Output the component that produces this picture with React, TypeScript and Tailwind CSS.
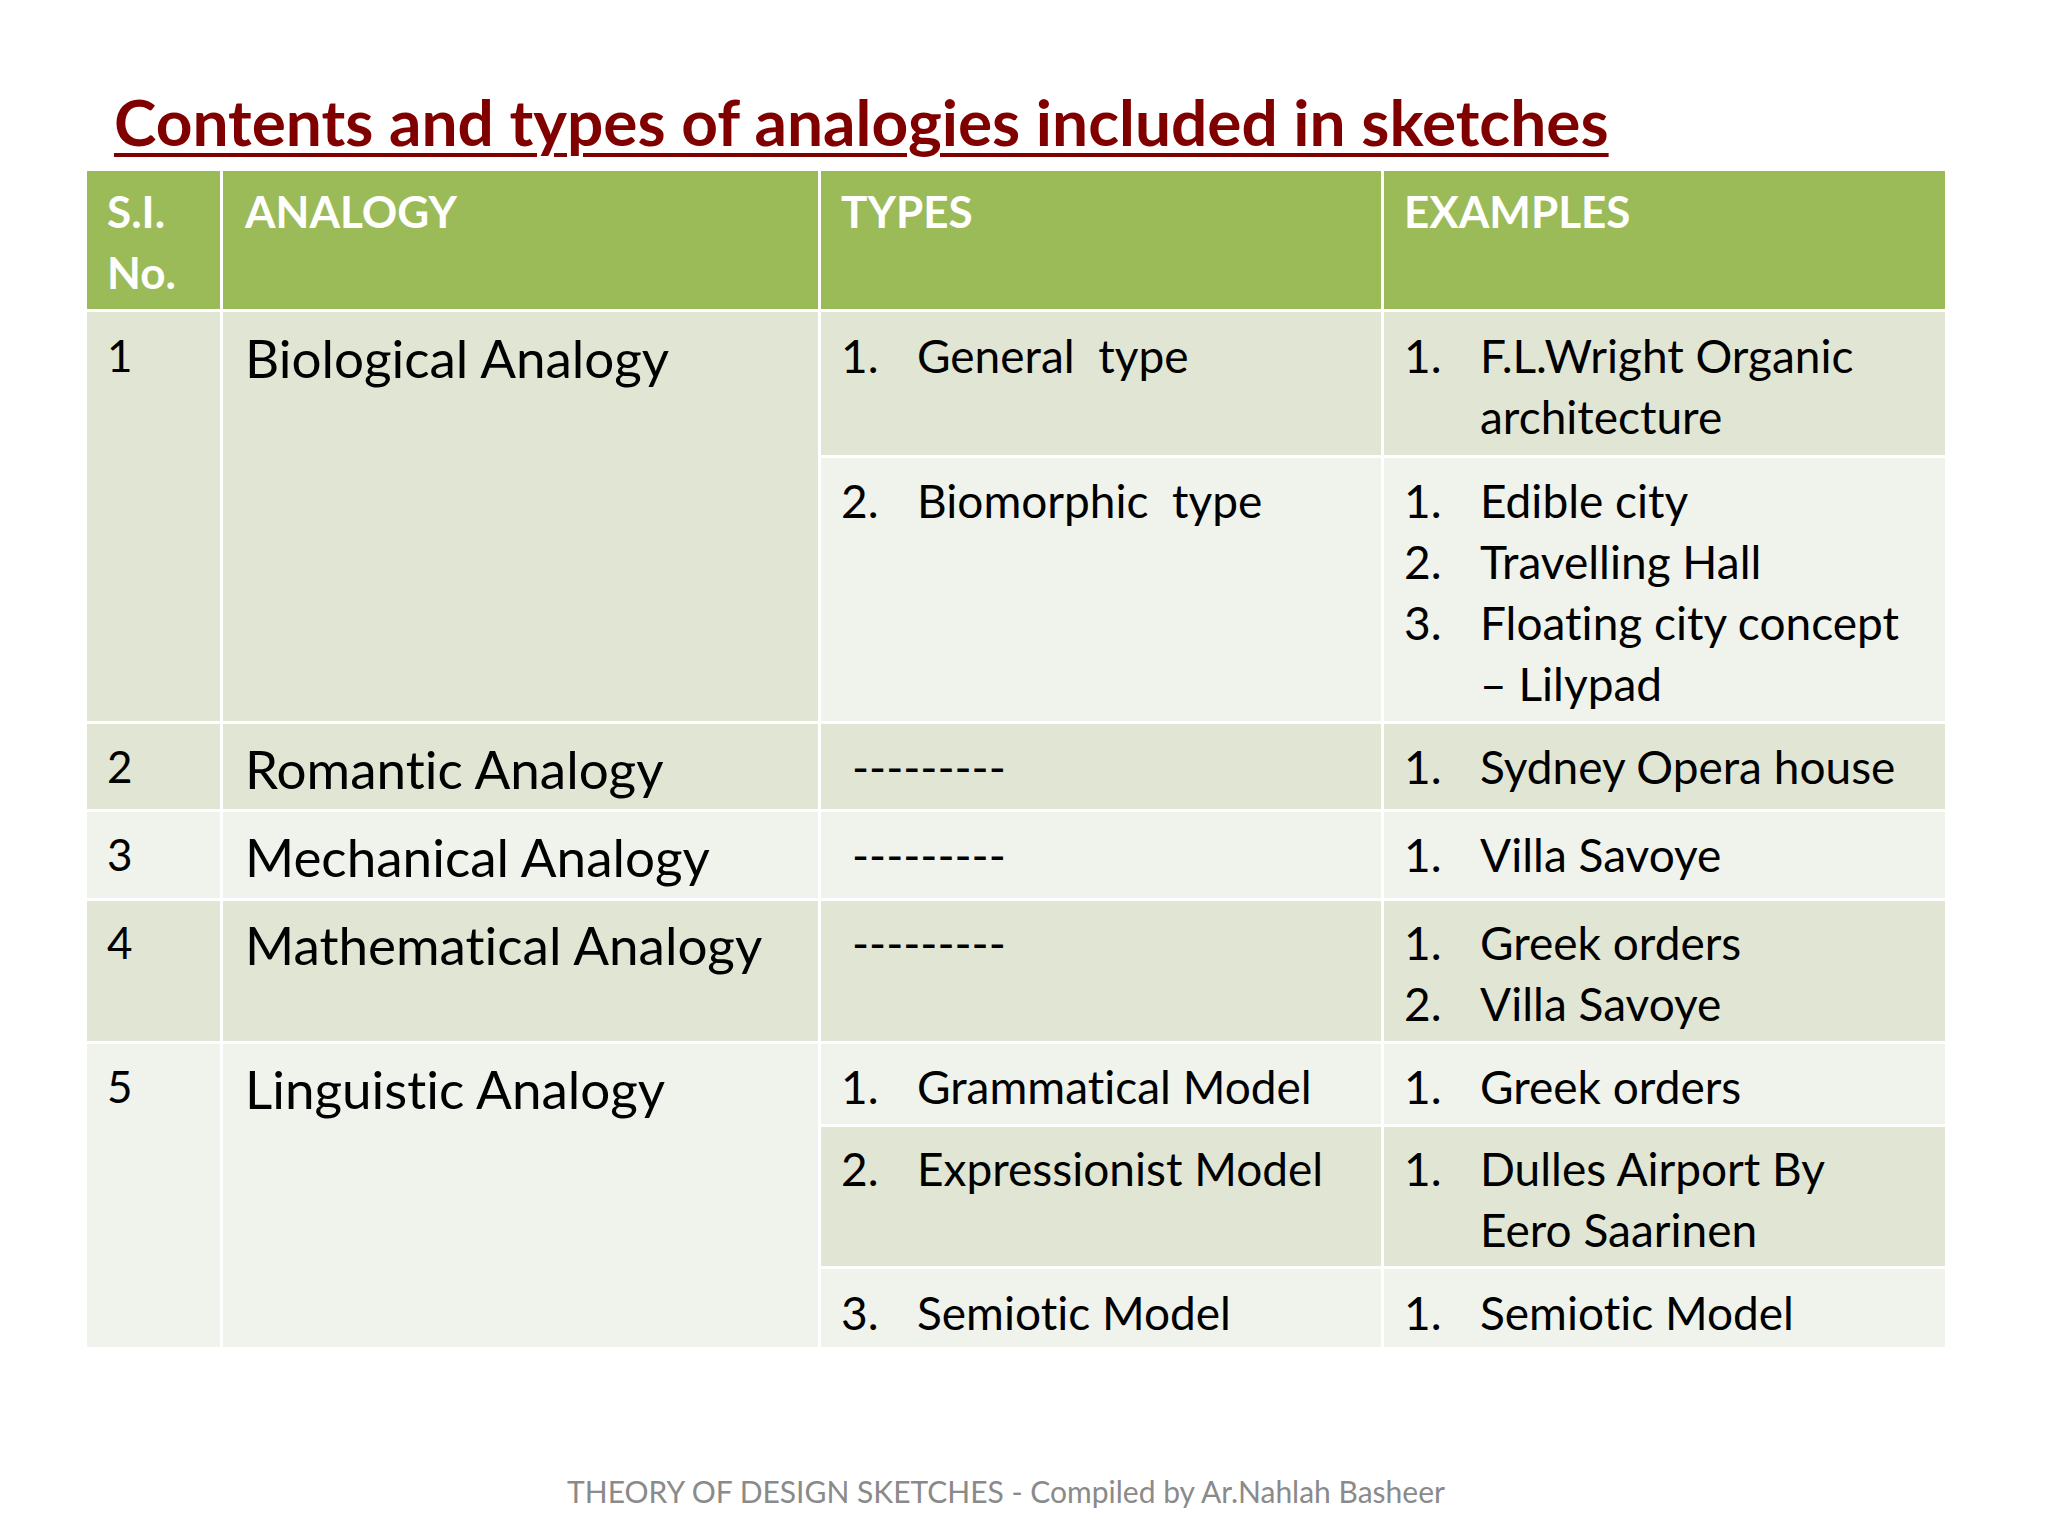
import React from "react";

const dark = "bg-[#e0e6d3]";
const light = "bg-[#eff3ec]";

function Num({ n, children }: { n: string; children: React.ReactNode }) {
  return (
    <div className="flex">
      <span className="w-[76px] shrink-0">{n}</span>
      <span>{children}</span>
    </div>
  );
}

export default function App() {
  const cell = "border-[3px] border-white align-top p-0";
  return (
    <div
      className="w-[2048px] h-[1536px] bg-white flex flex-col text-black [font-variant-ligatures:none]"
      style={{ fontFamily: "Lato, 'Open Sans', sans-serif" }}
    >
      <h1 className="ml-[114px] mt-[86px] text-[64px] leading-[72px] font-bold text-[#800000] underline decoration-[4px] underline-offset-[7px]">
        Contents and types of analogies included in sketches
      </h1>

      <table className="ml-[84px] mt-[10px] w-[1861px] table-fixed border-collapse text-[46px] leading-[61px]">
        <colgroup>
          <col className="w-[136px]" />
          <col className="w-[598px]" />
          <col className="w-[563px]" />
          <col className="w-[564px]" />
        </colgroup>
        <thead>
          <tr className="h-[141px] bg-[#9bbb59] text-white font-bold">
            <th className={`${cell} text-left pl-[20px] pt-[10px] text-[44px]`}>
              S.I.
              <br />
              No.
            </th>
            <th className={`${cell} text-left pl-[22px] pt-[10px] text-[44px]`}>ANALOGY</th>
            <th className={`${cell} text-left pl-[20px] pt-[10px] text-[44px]`}>TYPES</th>
            <th className={`${cell} text-left pl-[20px] pt-[10px] text-[44px]`}>EXAMPLES</th>
          </tr>
        </thead>
        <tbody>
          <tr className="h-[146px]">
            <td rowSpan={2} className={`${cell} ${dark} pl-[20px] pt-[13px] text-[44px]`}>1</td>
            <td rowSpan={2} className={`${cell} ${dark} pl-[22px] pt-[15px] text-[53px]`}>Biological Analogy</td>
            <td className={`${cell} ${dark} pl-[20px] pt-[13px]`}>
              <Num n="1.">General&nbsp; type</Num>
            </td>
            <td className={`${cell} ${dark} pl-[20px] pt-[13px]`}>
              <Num n="1.">F.L.Wright Organic architecture</Num>
            </td>
          </tr>
          <tr className="h-[266px]">
            <td className={`${cell} ${light} pl-[20px] pt-[12px]`}>
              <Num n="2.">Biomorphic&nbsp; type</Num>
            </td>
            <td className={`${cell} ${light} pl-[20px] pt-[12px]`}>
              <Num n="1.">Edible city</Num>
              <Num n="2.">Travelling Hall</Num>
              <Num n="3.">
                Floating city concept
                <br />– Lilypad
              </Num>
            </td>
          </tr>
          <tr className="h-[88px]">
            <td className={`${cell} ${dark} pl-[20px] pt-[12px] text-[44px]`}>2</td>
            <td className={`${cell} ${dark} pl-[22px] pt-[14px] text-[53px]`}>Romantic Analogy</td>
            <td className={`${cell} ${dark} pl-[31px] pt-[12px]`}>---------</td>
            <td className={`${cell} ${dark} pl-[20px] pt-[12px]`}>
              <Num n="1.">Sydney Opera house</Num>
            </td>
          </tr>
          <tr className="h-[89px]">
            <td className={`${cell} ${light} pl-[20px] pt-[12px] text-[44px]`}>3</td>
            <td className={`${cell} ${light} pl-[22px] pt-[14px] text-[53px]`}>Mechanical Analogy</td>
            <td className={`${cell} ${light} pl-[31px] pt-[12px]`}>---------</td>
            <td className={`${cell} ${light} pl-[20px] pt-[12px]`}>
              <Num n="1.">Villa Savoye</Num>
            </td>
          </tr>
          <tr className="h-[143px]">
            <td className={`${cell} ${dark} pl-[20px] pt-[11px] text-[44px]`}>4</td>
            <td className={`${cell} ${dark} pl-[22px] pt-[13px] text-[53px]`}>Mathematical Analogy</td>
            <td className={`${cell} ${dark} pl-[31px] pt-[11px]`}>---------</td>
            <td className={`${cell} ${dark} pl-[20px] pt-[11px]`}>
              <Num n="1.">Greek orders</Num>
              <Num n="2.">Villa Savoye</Num>
            </td>
          </tr>
          <tr className="h-[83px]">
            <td rowSpan={3} className={`${cell} ${light} pl-[20px] pt-[12px] text-[44px]`}>5</td>
            <td rowSpan={3} className={`${cell} ${light} pl-[22px] pt-[14px] text-[53px]`}>Linguistic Analogy</td>
            <td className={`${cell} ${light} pl-[20px] pt-[12px]`}>
              <Num n="1.">Grammatical Model</Num>
            </td>
            <td className={`${cell} ${light} pl-[20px] pt-[12px]`}>
              <Num n="1.">Greek orders</Num>
            </td>
          </tr>
          <tr className="h-[142px]">
            <td className={`${cell} ${dark} pl-[20px] pt-[11px]`}>
              <Num n="2.">Expressionist Model</Num>
            </td>
            <td className={`${cell} ${dark} pl-[20px] pt-[11px]`}>
              <Num n="1.">
                Dulles Airport By
                <br />
                Eero Saarinen
              </Num>
            </td>
          </tr>
          <tr className="h-[81px]">
            <td className={`${cell} ${light} pl-[20px] pt-[13px]`}>
              <Num n="3.">Semiotic Model</Num>
            </td>
            <td className={`${cell} ${light} pl-[20px] pt-[13px]`}>
              <Num n="1.">Semiotic Model</Num>
            </td>
          </tr>
        </tbody>
      </table>

      <div className="mt-auto mb-[22px] text-center text-[30px] text-[#8a8a8a] pr-[36px]">
        THEORY OF DESIGN SKETCHES - Compiled by Ar.Nahlah Basheer
      </div>
    </div>
  );
}
